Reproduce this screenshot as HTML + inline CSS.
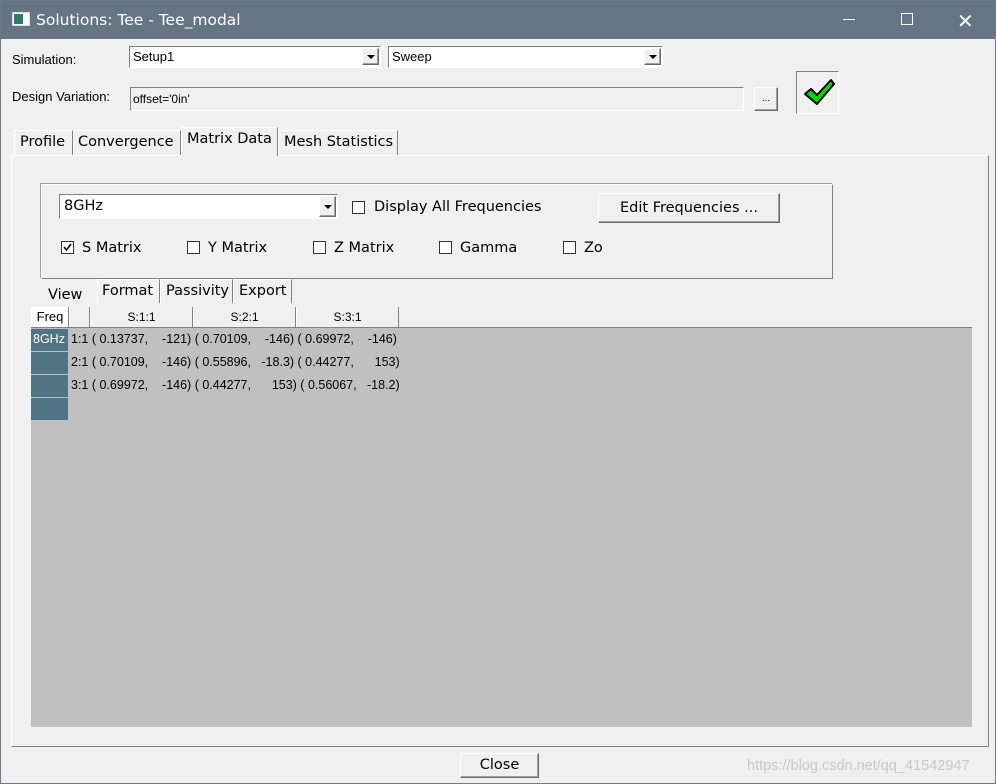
<html><head><style>
*{box-sizing:border-box}
body{margin:0;width:996px;height:784px;position:relative;background:#f0f0f0;font-family:"Liberation Sans",sans-serif;overflow:hidden;border:1px solid #6b7a8a}
.a{position:absolute}
.t{font-size:13px;color:#000;white-space:nowrap}
.s{font-family:"DejaVu Sans","Liberation Sans",sans-serif;font-size:14.5px;white-space:nowrap}
.sunk{border:1px solid;border-color:#808080 #fff #fff #808080;background:#fff}
.btn{border:1px solid;border-color:#fff #696969 #696969 #fff;background:#f0f0f0;box-shadow:inset -1px -1px #a0a0a0}
.dd{position:absolute;right:1px;top:1px;width:17px;height:17px}
.cb{position:absolute;width:13px;height:13px;border:1px solid #333;background:#fff}
.tab{position:absolute;border:1px solid;border-color:#fff #808080 transparent #fff;border-bottom:none;background:#f0f0f0}
.hc{position:absolute;top:306px;height:20px;border-right:1px solid #808080;border-left:1px solid #fff;background:#f0f0f0;font-size:12px;text-align:center;line-height:20px}
.row{position:absolute;left:70px;font-size:12.5px;white-space:pre;font-family:"Liberation Sans",sans-serif}
</style></head><body>
<div class="a" style="left:0;top:0;width:996px;height:38px;background:#667585"></div>
<div class="a" style="left:11px;top:11px;width:18px;height:14px;background:#fff;border:1px solid #ddd"><div style="position:absolute;left:1px;top:1px;width:9px;height:10px;background:#2f7a6a"></div></div>
<div class="a" style="left:35px;top:10px;font-size:15.5px;color:#fff;font-family:'DejaVu Sans',sans-serif">Solutions: Tee - Tee_modal</div>
<div class="a" style="left:842px;top:18px;width:12px;height:1px;background:#fff"></div>
<div class="a" style="left:900px;top:12px;width:12px;height:12px;border:1px solid #fff"></div>
<div class="a" style="left:956px;top:8px;color:#fff;font-size:20px">✕</div>

<div class="a t" style="left:11px;top:51px">Simulation:</div>
<div class="a sunk t" style="left:128px;top:45px;width:252px;height:22px;padding:2px 3px">Setup1<div class="dd btn"><svg width="15" height="15"><path d="M4 6h8l-4 4z"/></svg></div></div>
<div class="a sunk t" style="left:387px;top:45px;width:275px;height:22px;padding:2px 3px">Sweep<div class="dd btn"><svg width="15" height="15"><path d="M4 6h8l-4 4z"/></svg></div></div>
<div class="a t" style="left:11px;top:88px">Design Variation:</div>
<div class="a t" style="left:129px;top:86px;width:614px;height:24px;border:1px solid;border-color:#808080 #fff #fff #808080;padding:4px 2px;font-size:12px">offset='0in'</div>
<div class="a btn" style="left:753px;top:86px;width:24px;height:24px;font-size:10px;text-align:center;line-height:22px">...</div>
<div class="a" style="left:795px;top:70px;width:43px;height:43px;border:1px solid;border-color:#808080 #fff #fff #808080">
<svg width="41" height="41"><path d="M8 22l6-5 6 6 14-15 3 4-17 20z" fill="#00e000" stroke="#000" stroke-width="2" stroke-linejoin="round"/></svg></div>

<div class="a" style="left:10px;top:154px;width:978px;height:592px;border:1px solid;border-color:#fff #808080 #808080 #fff"></div>
<div class="tab s" style="left:13px;top:129px;width:59px;height:25px;padding:3px 5px">Profile</div>
<div class="tab s" style="left:72px;top:129px;width:108px;height:25px;padding:3px 4px">Convergence</div>
<div class="tab s" style="left:180px;top:126px;width:97px;height:29px;padding:3px 5px;z-index:2">Matrix Data</div>
<div class="tab s" style="left:277px;top:129px;width:120px;height:25px;padding:3px 5px">Mesh Statistics</div>

<div class="a" style="left:40px;top:183px;width:792px;height:95px;border:1px solid;border-color:#fff #808080 #808080 #fff;box-shadow:-1px -1px #a0a0a0"></div>
<div class="a sunk s" style="left:58px;top:193px;width:279px;height:25px;padding:3px 4px">8GHz<div class="dd btn" style="height:21px"><svg width="15" height="19"><path d="M4 8h8l-4 4z"/></svg></div></div>
<div class="cb" style="left:351px;top:200px"></div><div class="a s" style="left:373px;top:198px">Display All Frequencies</div>
<div class="a btn s" style="left:597px;top:192px;width:182px;height:30px;text-align:center;line-height:28px">Edit Frequencies ...</div>
<div class="cb" style="left:60px;top:240px"><svg width="11" height="11" style="position:absolute;top:0;left:0"><path d="M2 5l2.5 3L9 2" fill="none" stroke="#000" stroke-width="1.6"/></svg></div><div class="a s" style="left:81px;top:239px">S Matrix</div>
<div class="cb" style="left:186px;top:240px"></div><div class="a s" style="left:207px;top:239px">Y Matrix</div>
<div class="cb" style="left:312px;top:240px"></div><div class="a s" style="left:333px;top:239px">Z Matrix</div>
<div class="cb" style="left:438px;top:240px"></div><div class="a s" style="left:459px;top:239px">Gamma</div>
<div class="cb" style="left:562px;top:240px"></div><div class="a s" style="left:583px;top:239px">Zo</div>

<div class="a s" style="left:47px;top:286px">View</div>
<div class="tab s" style="left:96px;top:278px;width:63px;height:24px;padding:3px 4px">Format</div>
<div class="tab s" style="left:159px;top:278px;width:73px;height:24px;padding:3px 5px">Passivity</div>
<div class="tab s" style="left:232px;top:278px;width:59px;height:24px;padding:3px 5px">Export</div>

<div class="a" style="left:30px;top:306px;width:941px;height:420px;background:#c0c0c0"></div>
<div class="a" style="left:30px;top:306px;width:941px;height:21px;background:#f0f0f0;border-bottom:1px solid #808080"></div>
<div class="hc" style="left:30px;width:38px;background:#fff;font-size:13px">Freq</div>
<div class="hc" style="left:68px;width:21px"></div>
<div class="hc" style="left:89px;width:103px">S:1:1</div>
<div class="hc" style="left:192px;width:103px">S:2:1</div>
<div class="hc" style="left:295px;width:103px">S:3:1</div>
<div class="a" style="left:30px;top:328px;width:37px;height:91px;background:#4f7585"></div>
<div class="a" style="left:30px;top:350px;width:37px;height:1px;background:#c0c0c0"></div>
<div class="a" style="left:30px;top:373px;width:37px;height:1px;background:#c0c0c0"></div>
<div class="a" style="left:30px;top:396px;width:37px;height:1px;background:#c0c0c0"></div>
<div class="a" style="left:32px;top:331px;font-size:12.5px;color:#fff">8GHz</div>
<div class="row" style="top:331px">1:1 ( 0.13737,    -121) ( 0.70109,    -146) ( 0.69972,    -146)</div>
<div class="row" style="top:354px">2:1 ( 0.70109,    -146) ( 0.55896,   -18.3) ( 0.44277,      153)</div>
<div class="row" style="top:377px">3:1 ( 0.69972,    -146) ( 0.44277,      153) ( 0.56067,   -18.2)</div>

<div class="a btn s" style="left:459px;top:752px;width:79px;height:25px;text-align:center;line-height:23px">Close</div>
<div class="a" style="left:746px;top:757px;font-size:14.5px;color:#c8c8c8">https://blog.csdn.net/qq_41542947</div>
</body></html>
